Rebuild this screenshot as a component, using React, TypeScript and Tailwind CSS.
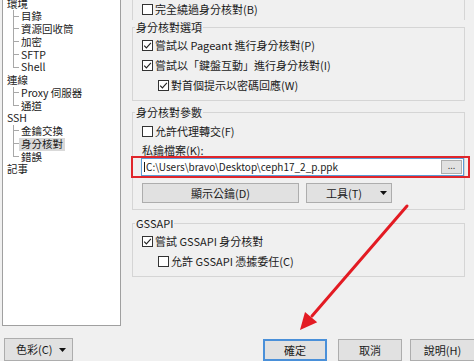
import React from 'react';

type Node = { label: string; children: string[] };

const tree: Node[] = [
  { label: '環境', children: ['目錄', '資源回收筒', '加密', 'SFTP', 'Shell'] },
  { label: '連線', children: ['Proxy 伺服器', '通道'] },
  { label: 'SSH', children: ['金鑰交換', '身分核對', '錯誤'] },
  { label: '記事', children: [] },
];

function Caret() {
  return (
    <svg width="7" height="4" viewBox="0 0 7 4">
      <polygon points="0,0 7,0 3.5,4" fill="#111" />
    </svg>
  );
}

function TreeChild({ label, last, selected }: { label: string; last: boolean; selected: boolean }) {
  return (
    <div className="flex h-[12.75px] items-stretch pl-[10px]">
      <div className="flex w-[6px] flex-col">
        <div className="h-1/2 border-b border-l border-[#a8a8a8]" />
        <div className={last ? 'h-1/2' : 'h-1/2 border-l border-[#a8a8a8]'} />
      </div>
      <span className={selected ? 'flex items-center bg-[#d9d9d9] px-[2px] leading-none' : 'flex items-center px-[2px] leading-none'}>
        {label}
      </span>
    </div>
  );
}

function Check({ label, checked = false, indent = false }: { label: string; checked?: boolean; indent?: boolean }) {
  return (
    <div className={indent ? 'flex h-[20px] items-center pl-[16px]' : 'flex h-[20px] items-center'}>
      <span className="flex h-[11px] w-[11px] shrink-0 items-center justify-center border border-[#333] bg-white">
        {checked && (
          <svg width="9" height="9" viewBox="0 0 9 9">
            <polyline points="1.2,4.6 3.4,6.9 7.9,1.8" fill="none" stroke="#222" strokeWidth="1.1" />
          </svg>
        )}
      </span>
      <span className="ml-[2px] whitespace-nowrap leading-[14px]">{label}</span>
    </div>
  );
}

const btn = 'flex items-center justify-center border border-[#adadad] bg-[#e1e1e1] leading-none';

export default function App() {
  return (
    <div className="relative h-[361px] w-[474px] overflow-hidden bg-[#f0f0f0] font-['Noto_Sans_CJK_TC',sans-serif] text-[11px] text-[#1b1b1b]">
      <div className="flex h-full">
        {/* left: category tree */}
        <div className="flex w-[121px] shrink-0 flex-col">
          <div className="-mt-[10px] ml-[2px] h-[338px] w-[119px] border border-[#a0a0a0] bg-white pt-[6.6px] text-[10.5px] text-[#222]">
            {tree.map((n) => (
              <div key={n.label}>
                <div className="flex h-[12.75px] items-center pl-[4px] leading-none">{n.label}</div>
                {n.children.map((c, i) => (
                  <TreeChild key={c} label={c} last={i === n.children.length - 1} selected={c === '身分核對'} />
                ))}
              </div>
            ))}
          </div>
          <button className={`${btn} ml-[4px] mt-[12px] h-[23px] w-[69px] !justify-start pl-[11px] pr-[6px]`}>
            <span>色彩(C)</span>
            <span className="ml-auto">
              <Caret />
            </span>
          </button>
        </div>

        {/* right: panel */}
        <div className="flex flex-1 flex-col pl-[11px]">
          <div className="h-[21px] w-[333px] border-x border-[#d5d5d5] pl-[9px]">
            <div className="-mt-[0.5px] flex h-[19px] items-center">
              <Check label="完全繞過身分核對(B)" />
            </div>
          </div>

          <fieldset className="w-[333px] border border-[#d5d5d5] pb-[5px]">
            <legend className="ml-[2px] px-[1px] leading-[14px]">身分核對選項</legend>
            <div className="mt-[1px] pl-[9px]">
              <Check label="嘗試以 Pageant 進行身分核對(P)" checked />
              <Check label="嘗試以「鍵盤互動」進行身分核對(I)" checked />
              <Check label="對首個提示以密碼回應(W)" checked indent />
            </div>
          </fieldset>

          <fieldset className="mt-[4px] w-[333px] border border-[#d5d5d5] pb-[6px]">
            <legend className="ml-[2px] px-[1px] leading-[14px]">身分核對參數</legend>
            <div className="mt-[2px] pl-[9px]">
              <Check label="允許代理轉交(F)" />
              <div className="flex h-[16px] items-end leading-[14px]">私鑰檔案(K):</div>
              <div className="relative -ml-[1px] flex h-[20px] w-[323px] items-center">
                <div className="flex h-[18px] w-full items-center border border-[#5b9bd5] bg-white pl-[2px] pr-[1px]">
                  <span className="border-l border-[#1b1b1b] pl-[1px] text-[10px] leading-none">
                    C:\Users\bravo\Desktop\ceph17_2_p.ppk
                  </span>
                  <span className="ml-auto flex h-[14px] w-[21px] items-center justify-center border border-[#adadad] bg-[#e1e1e1] pb-[3px] text-[9px] text-[#444]">
                    ...
                  </span>
                </div>
                <div className="absolute -left-[10px] -right-[6px] -top-[1px] -bottom-[1px] border-2 border-[#e0262b]" />
              </div>
              <div className="mt-[6px] flex h-[20px]">
                <button className={`${btn} w-[157px]`}>顯示公鑰(D)</button>
                <button className={`${btn} ml-[7px] w-[86px] !justify-start pl-[19px] pr-[4px]`}>
                  <span>工具(T)</span>
                  <span className="ml-auto">
                    <Caret />
                  </span>
                </button>
              </div>
            </div>
          </fieldset>

          <fieldset className="mt-[6px] w-[333px] border border-[#d5d5d5] pb-[5px]">
            <legend className="ml-[2px] px-[1px] leading-[14px]">GSSAPI</legend>
            <div className="mt-[1px] pl-[9px]">
              <Check label="嘗試 GSSAPI 身分核對" checked />
              <Check label="允許 GSSAPI 憑據委任(C)" indent />
            </div>
          </fieldset>

          <div className="-mr-[1px] mt-[62px] flex justify-end">
            <button className={`${btn} h-[22px] w-[64px] !border-2 !border-[#4a90d9]`}>確定</button>
            <button className={`${btn} ml-[11px] h-[22px] w-[64px]`}>取消</button>
            <button className={`${btn} ml-[8px] h-[22px] w-[65px]`}>說明(H)</button>
          </div>
        </div>
      </div>

      {/* red annotation arrow */}
      <svg className="pointer-events-none absolute inset-0" width="474" height="361" viewBox="0 0 474 361">
        <line x1="407" y1="206" x2="312" y2="316" stroke="#e31b23" strokeWidth="3" strokeLinecap="round" />
        <polygon points="300,330 305,311.9 317.2,322.3" fill="#e31b23" />
      </svg>
    </div>
  );
}
